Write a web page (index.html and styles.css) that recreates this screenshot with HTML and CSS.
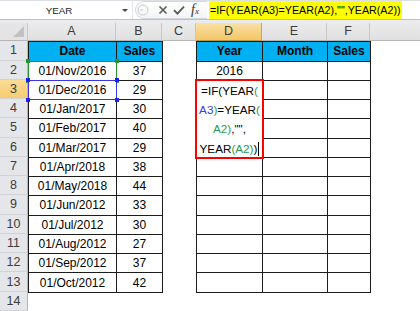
FILE: index.html
```html
<!DOCTYPE html>
<html>

<head>
  <title>YEAR</title>
  <link rel="stylesheet" href="styles.css">
</head>

<body>
  <div class="formulabar">
    <div class="namebox">
      <span class="name">YEAR</span>
      <span class="drop"></span>
    </div>
    <div class="fxbuttons">
      <svg class="grip" width="12" height="12" viewBox="0 0 12 12">
        <circle cx="6" cy="6" r="5" fill="#fbfbfb" stroke="#c6c9cd" />
        <path d="M3 6h3" stroke="#c0c0c0" />
      </svg>
      <svg class="cancel" width="10" height="10" viewBox="0 0 10 10">
        <path d="M1.5 1.5l7 7M8.5 1.5l-7 7" stroke="#5a5a5a" stroke-width="1.6" />
      </svg>
      <svg class="enter" width="12" height="10" viewBox="0 0 12 10">
        <path d="M1 5.2l3.4 3.4L11 1.6" stroke="#5a5a5a" stroke-width="1.8" fill="none" />
      </svg>
      <span class="fx">f<span class="fxx">x</span></span>
    </div>
    <div class="formula">
      <span class="mark">=IF(YEAR(A3)=YEAR(A2),"",YEAR(A2))</span>
    </div>
  </div>

  <div class="sheet">
    <!-- column headers -->
    <div class="corner"></div>
    <div class="ch">A</div>
    <div class="ch">B</div>
    <div class="ch">C</div>
    <div class="ch on">D</div>
    <div class="ch">E</div>
    <div class="ch">F</div>
    <div class="ch last"></div>

    <div class="rh">1</div>
    <div class="b hd">Date</div>
    <div class="b hd">Sales</div>
    <div class="c"></div>
    <div class="b hd">Year</div>
    <div class="b hd">Month</div>
    <div class="b hd">Sales</div>

    <div class="rh">2</div>
    <div class="b ref green">01/Nov/2016</div>
    <div class="b">37</div>
    <div class="c"></div>
    <div class="b">2016</div>
    <div class="b"></div>
    <div class="b"></div>

    <div class="rh on">3</div>
    <div class="b ref blue">01/Dec/2016</div>
    <div class="b">29</div>
    <div class="c"></div>
    <div class="edit">
      <span class="line">=IF(YEAR<span class="g">(</span></span>
      <span class="line"><span class="bl">A3</span><span class="g">)</span>=YEAR<span class="g">(</span></span>
      <span class="line"><span class="g">A2)</span>,"",</span>
      <span class="line">YEAR<span class="g">(A2)</span>)<span class="cursor"></span></span>
    </div>
    <div class="b"></div>
    <div class="b"></div>

    <div class="rh">4</div>
    <div class="b">01/Jan/2017</div>
    <div class="b">30</div>
    <div class="c"></div>
    <div class="b"></div>
    <div class="b"></div>

    <div class="rh">5</div>
    <div class="b">01/Feb/2017</div>
    <div class="b">40</div>
    <div class="c"></div>
    <div class="b"></div>
    <div class="b"></div>

    <div class="rh">6</div>
    <div class="b">01/Mar/2017</div>
    <div class="b">29</div>
    <div class="c"></div>
    <div class="b"></div>
    <div class="b"></div>

    <div class="rh">7</div>
    <div class="b">01/Apr/2018</div>
    <div class="b">38</div>
    <div class="c"></div>
    <div class="b"></div>
    <div class="b"></div>
    <div class="b"></div>

    <div class="rh">8</div>
    <div class="b">01/May/2018</div>
    <div class="b">44</div>
    <div class="c"></div>
    <div class="b"></div>
    <div class="b"></div>
    <div class="b"></div>

    <div class="rh">9</div>
    <div class="b">01/Jun/2012</div>
    <div class="b">33</div>
    <div class="c"></div>
    <div class="b"></div>
    <div class="b"></div>
    <div class="b"></div>

    <div class="rh">10</div>
    <div class="b">01/Jul/2012</div>
    <div class="b">30</div>
    <div class="c"></div>
    <div class="b"></div>
    <div class="b"></div>
    <div class="b"></div>

    <div class="rh">11</div>
    <div class="b">01/Aug/2012</div>
    <div class="b">27</div>
    <div class="c"></div>
    <div class="b"></div>
    <div class="b"></div>
    <div class="b"></div>

    <div class="rh">12</div>
    <div class="b">01/Sep/2012</div>
    <div class="b">37</div>
    <div class="c"></div>
    <div class="b"></div>
    <div class="b"></div>
    <div class="b"></div>

    <div class="rh">13</div>
    <div class="b">01/Oct/2012</div>
    <div class="b">42</div>
    <div class="c"></div>
    <div class="b"></div>
    <div class="b"></div>
    <div class="b"></div>

    <div class="rh">14</div>
  </div>
</body>

</html>
```

FILE: styles.css
```css
* {
  margin: 0;
  padding: 0;
  box-sizing: border-box;
}

body {
  font-family: "Liberation Sans", Arial, sans-serif;
  font-size: 12px;
  color: #000;
  background-color: #e9ebee;
  overflow: hidden;
}

/* formula bar */
.formulabar {
  display: flex;
  height: 20px;
  margin-bottom: 3px;
  background-color: #fff;
  border-top: 1px solid #dcdfe3;
  border-bottom: 1px solid #b9c1cb;
}

.namebox {
  display: flex;
  align-items: center;
  width: 133px;
  border-right: 1px solid #e2e4e7;
}

.name {
  width: 118px;
  text-align: center;
  font-size: 9.8px;
  color: #1e1e1e;
}

.drop {
  width: 0;
  height: 0;
  margin-left: 4px;
  border-left: 3px solid transparent;
  border-right: 3px solid transparent;
  border-top: 3px solid #444;
}

.fxbuttons {
  display: flex;
  align-items: center;
  width: 72px;
  margin-left: 2px;
  border: 1px solid #d4d8dd;
  border-right: none;
  border-radius: 9px 0 0 9px;
  background: linear-gradient(#ffffff, #f3f4f6);
}

.grip {
  margin-left: 1px;
}

.cancel {
  margin-left: 9px;
}

.enter {
  margin-left: 5px;
}

.fx {
  margin-left: 6px;
  font-family: "Liberation Serif", serif;
  font-style: italic;
  font-size: 14px;
  color: #333;
  line-height: 1;
}

.fxx {
  font-size: 9px;
}

.formula {
  flex: 1;
  display: flex;
  align-items: stretch;
  padding-left: 2px;
}

.mark {
  display: flex;
  align-items: center;
  padding: 0 1px;
  background-color: #ffff00;
  font-size: 10.7px;
  white-space: pre;
}

/* sheet */
.sheet {
  display: grid;
  grid-template-columns: 28px 88px 46px 34px 66px 65px 43px 1fr;
  grid-template-rows: 17.5px 20px repeat(13, 19.28px);
  background-color: #fff;
}

.corner {
  position: relative;
  background-color: #e4e4e4;
  border-right: 1px solid #c9c9c9;
  border-bottom: 1px solid #b5b5b5;
}

.corner::after {
  content: "";
  position: absolute;
  right: 3px;
  bottom: 3px;
  border-left: 11px solid transparent;
  border-bottom: 11px solid #c2c2c2;
}

.ch {
  display: flex;
  align-items: center;
  justify-content: center;
  background: linear-gradient(#ebebeb, #e0e0e0);
  border-right: 1px solid #c6c6c6;
  border-bottom: 1px solid #b5b5b5;
  color: #3c3c3c;
  font-size: 12.5px;
}

.ch.on {
  background: linear-gradient(#fbe1a6, #f3c567);
  border-right-color: #c9a55a;
  border-bottom-color: #c09447;
}

.ch.last {
  border-right: none;
}

.rh {
  grid-column: 1;
  display: flex;
  align-items: center;
  justify-content: center;
  background-color: #e4e6e9;
  border-right: 1px solid #b5b5b5;
  border-bottom: 1px solid #d0d2d5;
  color: #3c3c3c;
  font-size: 12.5px;
}

.rh.on {
  background: linear-gradient(#fadc95, #f5cd72);
}

.b {
  display: flex;
  align-items: center;
  justify-content: center;
  margin: 0 -1px -1px 0;
  border: 1px solid #1c1c1c;
  background-color: #fff;
}

.hd {
  background-color: #00b0f0;
  font-weight: bold;
}

/* reference highlights */
.ref {
  position: relative;
}

.ref::before {
  content: "";
  position: absolute;
  inset: -1px;
  border: 1px solid;
}

.ref::after {
  content: "";
  position: absolute;
  inset: -3px;
  background-repeat: no-repeat;
  background-size: 4px 4px;
  background-position: 0 0, 100% 0, 0 100%, 100% 100%;
}

.ref.green::before {
  border-color: #1f9a2a;
}

.ref.green::after {
  background-image: linear-gradient(#1f9a2a, #1f9a2a), linear-gradient(#1f9a2a, #1f9a2a),
    linear-gradient(#1f9a2a, #1f9a2a), linear-gradient(#1f9a2a, #1f9a2a);
}

.ref.blue::before {
  border-color: #3535f0;
}

.ref.blue::after {
  background-image: linear-gradient(#2020ee, #2020ee), linear-gradient(#2020ee, #2020ee),
    linear-gradient(#2020ee, #2020ee), linear-gradient(#2020ee, #2020ee);
}

/* cell in edit mode */
.edit {
  position: relative;
  z-index: 3;
  grid-row: span 4;
  display: flex;
  flex-direction: column;
  align-items: center;
  margin: -1px -2px -2px -1px;
  border: 2.5px solid #ff0000;
  background-color: #fff;
  font-size: 11.7px;
}

.line {
  display: block;
  height: 19.28px;
  line-height: 19.28px;
  white-space: nowrap;
}

.edit .g {
  color: #2e9b52;
}

.edit .bl {
  color: #3a3ae6;
}

.cursor {
  display: inline-block;
  width: 1px;
  height: 14px;
  margin-left: 1px;
  vertical-align: -3px;
  background-color: #000;
}
```
